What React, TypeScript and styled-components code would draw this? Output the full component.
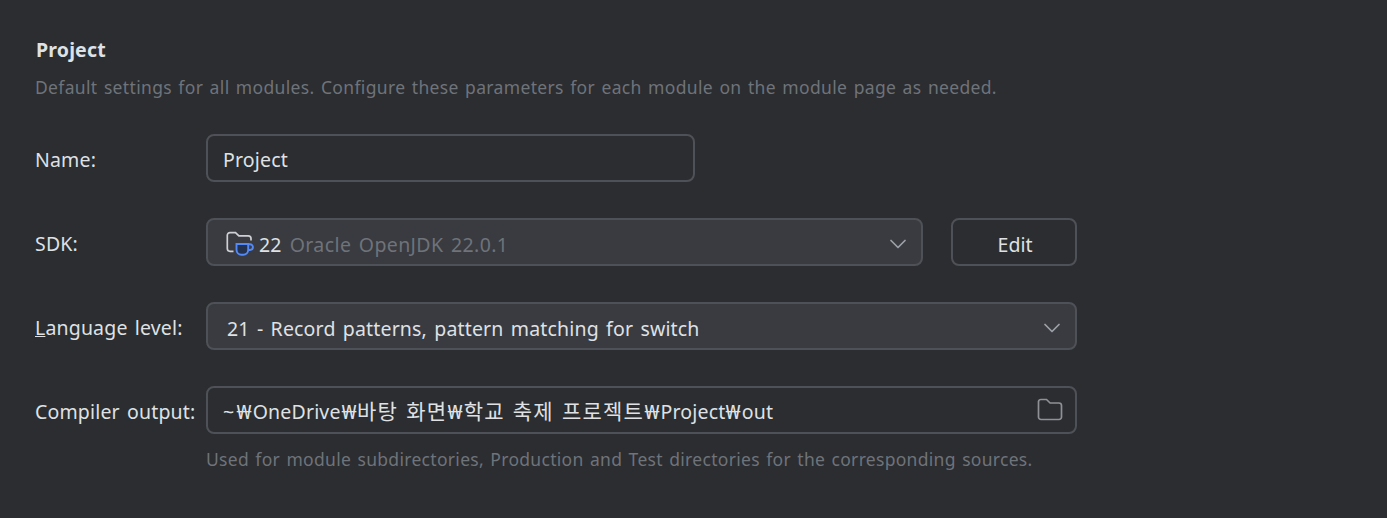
import React from "react";
import styled, { createGlobalStyle } from "styled-components";
import { ChevronDown } from "lucide-react";

const GlobalStyle = createGlobalStyle`
  html, body {
    margin: 0;
    padding: 0;
    background: #2b2d30;
  }
`;

const Page = styled.div`
  box-sizing: border-box;
  width: 1387px;
  height: 518px;
  padding: 37px 0 0 35px;
  background: #2b2d30;
  color: #dfe1e5;
  font-family: "Noto Sans", "Noto Sans CJK KR", sans-serif;
  font-size: 19.5px;
  letter-spacing: 0.17px;
  word-spacing: 2px;
  overflow: hidden;
`;

const Title = styled.h1`
  margin: 0 0 0 1px;
  font-size: 19.5px;
  line-height: 26px;
  font-weight: 700;
  color: #dfe1e5;
`;

const Hint = styled.p<{ $indent?: boolean }>`
  margin: ${({ $indent }) => ($indent ? "13px 0 0 171px" : "12px 0 0")};
  font-size: 17.5px;
  line-height: 24px;
  letter-spacing: ${({ $indent }) => ($indent ? "0.3px" : "0.34px")};
  word-spacing: 1.5px;
  color: #6f737a;
`;

const Form = styled.div`
  display: flex;
  flex-direction: column;
  gap: 36px;
  margin-top: 35px;
`;

const Row = styled.div`
  display: flex;
  align-items: center;
`;

const Label = styled.label`
  width: 171px;
  flex: none;
  padding-top: 4px;
  line-height: 26px;
`;

const Mnemonic = styled.span`
  text-decoration: underline;
`;

const Field = styled.div<{ $width: number; $filled?: boolean }>`
  box-sizing: border-box;
  display: flex;
  align-items: center;
  width: ${({ $width }) => $width}px;
  height: 48px;
  padding: 0 ${({ $filled }) => ($filled ? "9px 0 19px" : "12px 0 15px")};
  border: 2px solid #4e5157;
  border-radius: 8px;
  background: ${({ $filled }) => ($filled ? "#393b40" : "transparent")};
  white-space: nowrap;
`;

const Value = styled.span<{ $lower?: boolean }>`
  flex: 1;
  padding-top: ${({ $lower }) => ($lower ? 5 : 3)}px;
`;

const Muted = styled.span`
  color: #6f737a;
  margin-left: 8px;
  letter-spacing: 0.4px;
`;

const Hangul = styled.span`
  font-size: 21px;
  line-height: 1;
  letter-spacing: 1.2px;
  word-spacing: 1.5px;
`;

const Won = styled.span`
  display: inline-block;
  width: 16.4px;
  line-height: 1;
  text-align: center;
  transform: scaleX(1.15);
`;

const Tilde = styled.span`
  margin-right: 2px;
`;

const Arrow = styled(ChevronDown)`
  flex: none;
  width: 28px;
  height: 28px;
  margin-top: 3px;
  color: #9da0a8;
  stroke-width: 1.5;
`;

const Button = styled.button`
  box-sizing: border-box;
  width: 126px;
  height: 48px;
  margin-left: 28px;
  padding: 4px 0 0 2px;
  border: 2px solid #4e5157;
  border-radius: 8px;
  background: transparent;
  color: #dfe1e5;
  font: inherit;
`;

const SdkGlyph = styled.svg`
  flex: none;
  margin: 4px 5px 0 -1px;
`;

const FolderGlyph = styled.svg`
  flex: none;
`;

const SdkIcon = () => (
  <SdkGlyph width="28" height="28" viewBox="0 0 28 28" fill="none">
    <path
      d="M7.500 21.300H4A2.700 2.700 0 0 1 1.300 18.600V5.300A2.700 2.700 0 0 1 4 2.600h5.500l3.400 3.300H22.300A2.700 2.700 0 0 1 25 8.600V10.500"
      stroke="#ced0d6"
      strokeWidth="1.700"
    />
    <path
      d="M10.500 14h11.700v5.800a5 5 0 0 1-5 5h-1.700a5 5 0 0 1-5-5z"
      fill="#25324d"
      stroke="#548af7"
      strokeWidth="1.900"
    />
    <path d="M22.200 14.200h1.800a2.400 2.400 0 0 1 0 5.800h-1.800" stroke="#548af7" strokeWidth="1.900" />
  </SdkGlyph>
);

const FolderIcon = () => (
  <FolderGlyph width="26" height="24" viewBox="0 0 26 24" fill="none">
    <path
      d="M1.500 3.500A2.500 2.500 0 0 1 4 1.500h5.500l3.600 3.500H22A2.500 2.500 0 0 1 24.500 7.500v11.500a2.500 2.500 0 0 1-2.500 2.500H4A2.500 2.500 0 0 1 1.500 19z"
      stroke="#8f9197"
      strokeWidth="1.700"
    />
  </FolderGlyph>
);

const App: React.FC = () => {
  return (
    <Page>
      <GlobalStyle />
      <Title>Project</Title>
      <Hint>
        Default settings for all modules. Configure these parameters for each module on the module page as needed.
      </Hint>
      <Form>
        <Row>
          <Label>Name:</Label>
          <Field $width={489}>
            <Value>Project</Value>
          </Field>
        </Row>
        <Row>
          <Label>SDK:</Label>
          <Field $width={717} $filled>
            <SdkIcon />
            <Value $lower>
              22<Muted>Oracle OpenJDK 22.0.1</Muted>
            </Value>
            <Arrow />
          </Field>
          <Button>Edit</Button>
        </Row>
        <Row>
          <Label>
            <Mnemonic>L</Mnemonic>anguage level:
          </Label>
          <Field $width={871} $filled>
            <Value $lower>21 - Record patterns, pattern matching for switch</Value>
            <Arrow />
          </Field>
        </Row>
        <Row>
          <Label>Compiler output:</Label>
          <Field $width={871}>
            <Value>
              <Tilde>~</Tilde>
              <Won>₩</Won>OneDrive<Won>₩</Won>
              <Hangul>바탕 화면</Hangul>
              <Won>₩</Won>
              <Hangul>학교 축제 프로젝트</Hangul>
              <Won>₩</Won>Project<Won>₩</Won>out
            </Value>
            <FolderIcon />
          </Field>
        </Row>
      </Form>
      <Hint $indent>Used for module subdirectories, Production and Test directories for the corresponding sources.</Hint>
    </Page>
  );
};

export default App;
